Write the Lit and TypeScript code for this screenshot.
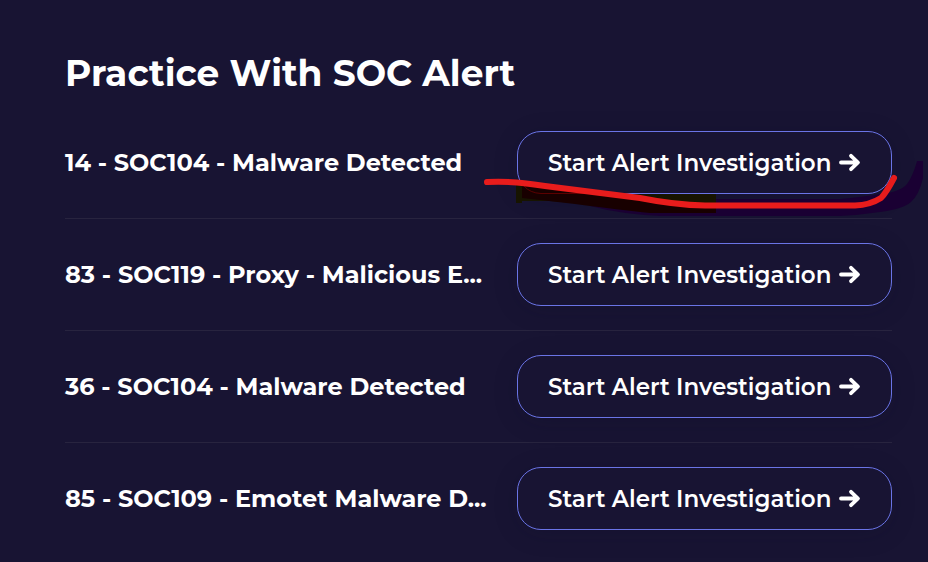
import { LitElement, html, css } from "lit";
import { customElement, property } from "lit/decorators.js";

@customElement("alert-row")
export class AlertRow extends LitElement {
  static styles = css`
    :host {
      display: flex;
      align-items: center;
      justify-content: space-between;
      gap: 24px;
      padding: 24px 0;
      border-bottom: 1px solid #28243f;
    }
    :host(:last-of-type) {
      border-bottom: none;
    }
    .title {
      margin: 0;
      min-width: 0;
      font-size: 24px;
      line-height: 32px;
      font-weight: 700;
      white-space: nowrap;
    }
    .start {
      flex: none;
      display: flex;
      align-items: center;
      gap: 8px;
      justify-content: space-between;
      width: 375px;
      height: 63px;
      padding: 0 30px;
      border: 1px solid #6a74e6;
      border-radius: 24px;
      background: #181433;
      box-shadow: 0 4px 24px rgba(16, 14, 42, 0.2);
      color: #fff;
      font: inherit;
      font-size: 23px;
      line-height: 32px;
      font-weight: 600;
      white-space: nowrap;
      cursor: pointer;
      box-sizing: border-box;
    }
    .arrow {
      display: block;
      flex: none;
    }
  `;

  @property() title = "";

  render() {
    return html`
      <h2 class="title">${this.title}</h2>
      <button class="start" type="button">
        <span>Start Alert Investigation</span>
        <svg class="arrow" width="22" height="20" viewBox="0 0 22 20" fill="none" stroke="#fff" stroke-width="3.8" stroke-linecap="round" stroke-linejoin="round" aria-hidden="true">
          <path d="M2 9.500H18.500M12 2.800L19 9.500L12 16.200" />
        </svg>
      </button>
    `;
  }
}

@customElement("app-root")
export class AppRoot extends LitElement {
  static styles = css`
    :host {
      display: block;
      box-sizing: border-box;
      min-height: 100vh;
      padding: 51px 36px 8px 65px;
      background: #181433;
      color: #fff;
      font-family: Montserrat, Inter, sans-serif;
    }
    .heading {
      margin: 0 0 12px;
      font-size: 36px;
      line-height: 44px;
      font-weight: 700;
      white-space: nowrap;
    }
    .list {
      position: relative;
    }
    .mark {
      position: absolute;
      top: 43px;
      right: -36px;
      pointer-events: none;
    }
  `;

  private alerts = [
    "14 - SOC104 - Malware Detected",
    "83 - SOC119 - Proxy - Malicious E...",
    "36 - SOC104 - Malware Detected",
    "85 - SOC109 - Emotet Malware D...",
  ];

  render() {
    return html`
      <h1 class="heading">Practice With SOC Alert</h1>
      <div class="list">
        ${this.alerts.map((a) => html`<alert-row .title=${a}></alert-row>`)}
        <svg class="mark" width="448" height="70" viewBox="480 150 448 70" fill="none" aria-hidden="true">
          <path fill="#1a0033" d="M600 203L630 199H840Q862 197 880 194Q900 192 907 184Q913 176 917 161H923V178Q919 195 911 202Q903 209 880 212Q860 215 840 216H660Q620 214 590 206Z" />
          <path fill="#171400" d="M516 184L545 186L630 194H716V213H700L575 203L550 201L522 201V203H516Z" />
          <path fill="#180000" d="M522 185L545 187L640 199L680 203H716V213H650Q620 210 575 204L540 200L522 198Z" />
          <path stroke="#5c0000" stroke-width="1" d="M524 186Q530 193 541 193.500H600" />
          <path stroke="#e81c1c" stroke-width="6" stroke-linecap="round" stroke-linejoin="round" d="M487 182C510 181 524 183 545 186L640 198Q675 205 705 205.500H855Q870 205 881 198Q886 193 894 178" />
        </svg>
      </div>
    `;
  }
}
